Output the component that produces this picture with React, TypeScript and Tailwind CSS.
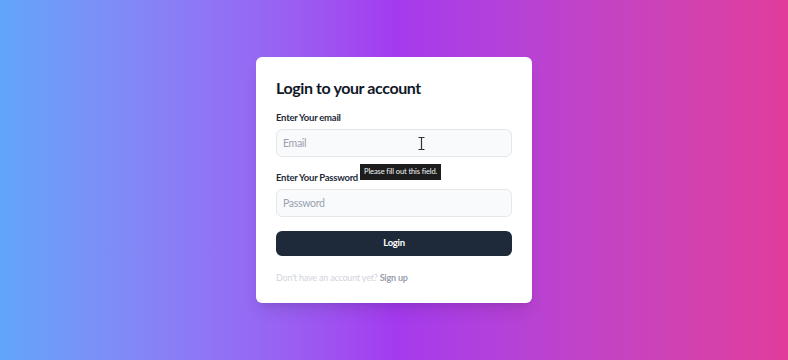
import { useState } from 'react'

export default function App() {
  const [email, setEmail] = useState('')
  const [password, setPassword] = useState('')

  return (
    <div
      className="min-h-screen w-full flex justify-center bg-gradient-to-r from-[#60a5fa] via-[#a43aef] to-[#e13c9b]"
      style={{ fontFamily: 'Lato, "Open Sans", sans-serif' }}
    >
      <div className="mt-[57px] h-[246px] w-[276px] bg-white rounded-md shadow-lg px-5 pt-[19px]">
        <h1 className="text-[16px] leading-6 font-bold tracking-[-0.4px] text-gray-900">
          Login to your account
        </h1>

        <form className="flex flex-col" onSubmit={(e) => e.preventDefault()}>
          {/* Email */}
          <label className="mt-[10px] text-[9.5px] leading-4 font-bold tracking-[-0.25px] text-gray-800">
            Enter Your email
          </label>
          <div className="relative mt-[3px]">
            <input
              type="email"
              required
              value={email}
              onChange={(e) => setEmail(e.target.value)}
              placeholder="Email"
              className="h-[28px] w-full rounded-md border border-gray-200 bg-gray-50 px-[6px] text-[10.5px] tracking-[-0.3px] text-gray-700 placeholder:text-gray-400 outline-none"
            />
            {/* text cursor */}
            <svg className="absolute left-[142px] top-[8px]" width="7" height="13" viewBox="0 0 7 13">
              <path d="M0.5 0.5h6M0.5 12.5h6M3.5 0.5v12" stroke="#333" strokeWidth="1.2" fill="none" />
            </svg>
            {/* validation tooltip */}
            <div className="absolute left-[84px] top-[35px] z-10 bg-[#1c1c1c] px-[4px] py-[2px] text-[7.5px] leading-3 tracking-[-0.1px] text-gray-100 whitespace-nowrap">
              Please fill out this field.
            </div>
          </div>

          {/* Password */}
          <label className="mt-[13px] text-[9.5px] leading-4 font-bold tracking-[-0.25px] text-gray-800">
            Enter Your Password
          </label>
          <input
            type="password"
            required
            value={password}
            onChange={(e) => setPassword(e.target.value)}
            placeholder="Password"
            className="mt-[3px] h-[28px] w-full rounded-md border border-gray-200 bg-gray-50 px-[6px] text-[10.5px] tracking-[-0.3px] text-gray-700 placeholder:text-gray-400 outline-none"
          />

          <button
            type="submit"
            className="mt-[14px] h-[25px] w-full rounded-md bg-gray-800 text-[9.5px] font-bold tracking-[-0.3px] text-white"
          >
            Login
          </button>

          <p className="mt-[14px] text-[9px] leading-4 tracking-[-0.2px] text-gray-300">
            Don't have an account yet?{' '}
            <a href="#" className="font-bold text-gray-400">
              Sign up
            </a>
          </p>
        </form>
      </div>
    </div>
  )
}
